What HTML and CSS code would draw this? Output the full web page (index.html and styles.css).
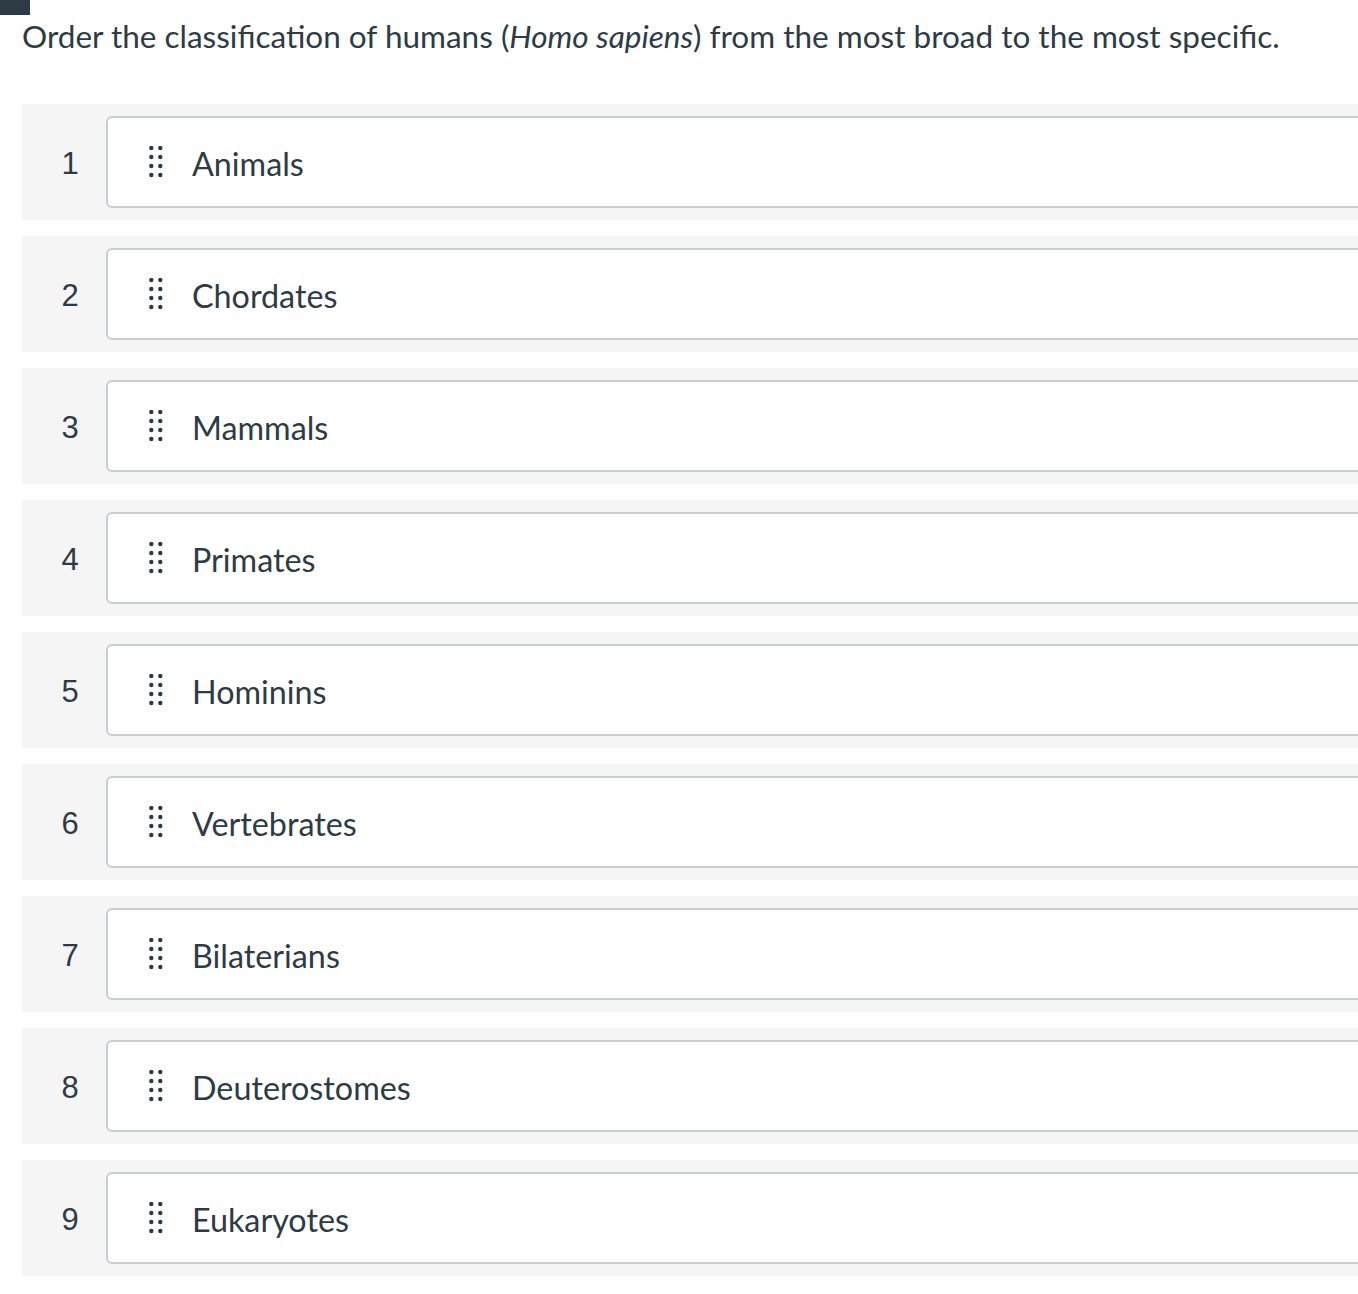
FILE: index.html
```html
<!DOCTYPE html>
<html lang="en">
<head>
    <meta charset="UTF-8">
    <meta name="viewport" content="width=device-width, initial-scale=1.0">
    <title>Ordering question</title>
    <link rel="stylesheet" href="styles.css">
</head>
<body>
    <div class="top-tab"></div>

    <h1 class="question">Order the classification of humans (<em>Homo sapiens</em>) from the most broad to the most specific.</h1>

    <!-- Sortable answer list -->
    <ol class="order-list">
        <li class="order-row">
            <span class="order-num">1</span>
            <div class="order-item">
                <svg class="handle" viewBox="0 0 14 32" width="14" height="32"><g fill="#2d3b45"><circle cx="2.3" cy="2" r="2.2"/><circle cx="11.3" cy="2" r="2.2"/><circle cx="2.3" cy="11" r="2.2"/><circle cx="11.3" cy="11" r="2.2"/><circle cx="2.3" cy="20" r="2.2"/><circle cx="11.3" cy="20" r="2.2"/><circle cx="2.3" cy="29" r="2.2"/><circle cx="11.3" cy="29" r="2.2"/></g></svg>
                <span class="item-text">Animals</span>
            </div>
        </li>
        <li class="order-row">
            <span class="order-num">2</span>
            <div class="order-item">
                <svg class="handle" viewBox="0 0 14 32" width="14" height="32"><g fill="#2d3b45"><circle cx="2.3" cy="2" r="2.2"/><circle cx="11.3" cy="2" r="2.2"/><circle cx="2.3" cy="11" r="2.2"/><circle cx="11.3" cy="11" r="2.2"/><circle cx="2.3" cy="20" r="2.2"/><circle cx="11.3" cy="20" r="2.2"/><circle cx="2.3" cy="29" r="2.2"/><circle cx="11.3" cy="29" r="2.2"/></g></svg>
                <span class="item-text">Chordates</span>
            </div>
        </li>
        <li class="order-row">
            <span class="order-num">3</span>
            <div class="order-item">
                <svg class="handle" viewBox="0 0 14 32" width="14" height="32"><g fill="#2d3b45"><circle cx="2.3" cy="2" r="2.2"/><circle cx="11.3" cy="2" r="2.2"/><circle cx="2.3" cy="11" r="2.2"/><circle cx="11.3" cy="11" r="2.2"/><circle cx="2.3" cy="20" r="2.2"/><circle cx="11.3" cy="20" r="2.2"/><circle cx="2.3" cy="29" r="2.2"/><circle cx="11.3" cy="29" r="2.2"/></g></svg>
                <span class="item-text">Mammals</span>
            </div>
        </li>
        <li class="order-row">
            <span class="order-num">4</span>
            <div class="order-item">
                <svg class="handle" viewBox="0 0 14 32" width="14" height="32"><g fill="#2d3b45"><circle cx="2.3" cy="2" r="2.2"/><circle cx="11.3" cy="2" r="2.2"/><circle cx="2.3" cy="11" r="2.2"/><circle cx="11.3" cy="11" r="2.2"/><circle cx="2.3" cy="20" r="2.2"/><circle cx="11.3" cy="20" r="2.2"/><circle cx="2.3" cy="29" r="2.2"/><circle cx="11.3" cy="29" r="2.2"/></g></svg>
                <span class="item-text">Primates</span>
            </div>
        </li>
        <li class="order-row">
            <span class="order-num">5</span>
            <div class="order-item">
                <svg class="handle" viewBox="0 0 14 32" width="14" height="32"><g fill="#2d3b45"><circle cx="2.3" cy="2" r="2.2"/><circle cx="11.3" cy="2" r="2.2"/><circle cx="2.3" cy="11" r="2.2"/><circle cx="11.3" cy="11" r="2.2"/><circle cx="2.3" cy="20" r="2.2"/><circle cx="11.3" cy="20" r="2.2"/><circle cx="2.3" cy="29" r="2.2"/><circle cx="11.3" cy="29" r="2.2"/></g></svg>
                <span class="item-text">Hominins</span>
            </div>
        </li>
        <li class="order-row">
            <span class="order-num">6</span>
            <div class="order-item">
                <svg class="handle" viewBox="0 0 14 32" width="14" height="32"><g fill="#2d3b45"><circle cx="2.3" cy="2" r="2.2"/><circle cx="11.3" cy="2" r="2.2"/><circle cx="2.3" cy="11" r="2.2"/><circle cx="11.3" cy="11" r="2.2"/><circle cx="2.3" cy="20" r="2.2"/><circle cx="11.3" cy="20" r="2.2"/><circle cx="2.3" cy="29" r="2.2"/><circle cx="11.3" cy="29" r="2.2"/></g></svg>
                <span class="item-text">Vertebrates</span>
            </div>
        </li>
        <li class="order-row">
            <span class="order-num">7</span>
            <div class="order-item">
                <svg class="handle" viewBox="0 0 14 32" width="14" height="32"><g fill="#2d3b45"><circle cx="2.3" cy="2" r="2.2"/><circle cx="11.3" cy="2" r="2.2"/><circle cx="2.3" cy="11" r="2.2"/><circle cx="11.3" cy="11" r="2.2"/><circle cx="2.3" cy="20" r="2.2"/><circle cx="11.3" cy="20" r="2.2"/><circle cx="2.3" cy="29" r="2.2"/><circle cx="11.3" cy="29" r="2.2"/></g></svg>
                <span class="item-text">Bilaterians</span>
            </div>
        </li>
        <li class="order-row">
            <span class="order-num">8</span>
            <div class="order-item">
                <svg class="handle" viewBox="0 0 14 32" width="14" height="32"><g fill="#2d3b45"><circle cx="2.3" cy="2" r="2.2"/><circle cx="11.3" cy="2" r="2.2"/><circle cx="2.3" cy="11" r="2.2"/><circle cx="11.3" cy="11" r="2.2"/><circle cx="2.3" cy="20" r="2.2"/><circle cx="11.3" cy="20" r="2.2"/><circle cx="2.3" cy="29" r="2.2"/><circle cx="11.3" cy="29" r="2.2"/></g></svg>
                <span class="item-text">Deuterostomes</span>
            </div>
        </li>
        <li class="order-row">
            <span class="order-num">9</span>
            <div class="order-item">
                <svg class="handle" viewBox="0 0 14 32" width="14" height="32"><g fill="#2d3b45"><circle cx="2.3" cy="2" r="2.2"/><circle cx="11.3" cy="2" r="2.2"/><circle cx="2.3" cy="11" r="2.2"/><circle cx="11.3" cy="11" r="2.2"/><circle cx="2.3" cy="20" r="2.2"/><circle cx="11.3" cy="20" r="2.2"/><circle cx="2.3" cy="29" r="2.2"/><circle cx="11.3" cy="29" r="2.2"/></g></svg>
                <span class="item-text">Eukaryotes</span>
            </div>
        </li>
    </ol>
</body>
</html>
```

FILE: styles.css
```css
html { overflow: hidden; }
body {
    margin: 0;
    font-family: Lato, "Open Sans", sans-serif;
    color: #2d3b45;
    background: #fff;
}
.top-tab {
    width: 30px;
    height: 15px;
    background-color: #2d3b45;
}
.question {
    margin: 3px 0 0 22px;
    font-size: 31.5px;
    font-weight: normal;
    line-height: 36px;
    white-space: nowrap;
}
.question em { font-style: italic; }
.order-list {
    list-style: none;
    margin: 50px 0 0 22px;
    padding: 0;
    width: 1420px;
}
.order-row {
    display: flex;
    align-items: center;
    background-color: #f5f5f5;
    padding: 12px 0;
    margin-bottom: 16px;
}
.order-num {
    width: 72px;
    padding: 3px 0 0 12px;
    text-align: center;
    font-family: "Liberation Sans", Arial, sans-serif;
    font-size: 31px;
    line-height: 36px;
}
.order-item {
    flex: 1;
    display: flex;
    align-items: center;
    height: 88px;
    background-color: #fff;
    border: 2px solid #c7cdd1;
    border-radius: 6px 0 0 6px;
    padding-left: 41px;
}
.handle {
    flex: none;
    margin-right: 29px;
}
.item-text {
    font-size: 32.3px;
    line-height: 38px;
    padding-top: 3px;
}
```
